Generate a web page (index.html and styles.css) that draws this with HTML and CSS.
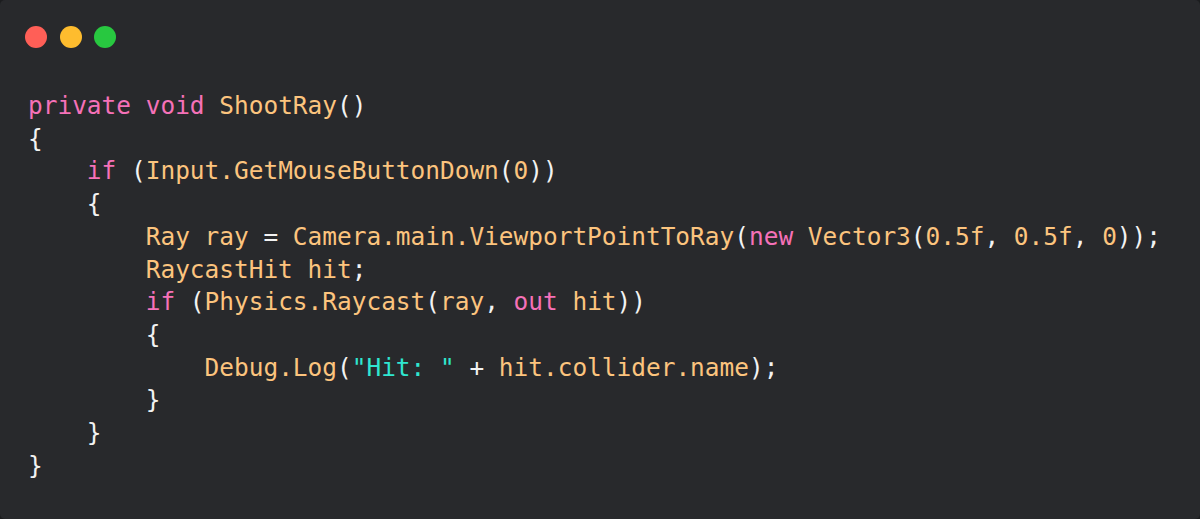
FILE: index.html
```html
<!DOCTYPE html>
<html>
<head>
<meta charset="utf-8">
<link rel="stylesheet" href="styles.css">
</head>
<body>
<div class="window">
  <div class="titlebar">
    <span class="dot red"></span>
    <span class="dot yellow"></span>
    <span class="dot green"></span>
  </div>
<pre class="code"><span class="k">private</span> <span class="k">void</span> <span class="f">ShootRay</span>()
{
    <span class="k">if</span> (<span class="f">Input.GetMouseButtonDown</span>(<span class="f">0</span>))
    {
        <span class="f">Ray ray</span> = <span class="f">Camera.main.ViewportPointToRay</span>(<span class="k">new</span> <span class="f">Vector3</span>(<span class="f">0.5f</span>, <span class="f">0.5f</span>, <span class="f">0</span>));
        <span class="f">RaycastHit hit</span>;
        <span class="k">if</span> (<span class="f">Physics.Raycast</span>(<span class="f">ray</span>, <span class="k">out</span> <span class="f">hit</span>))
        {
            <span class="f">Debug.Log</span>(<span class="s">"Hit: "</span> + <span class="f">hit.collider.name</span>);
        }
    }
}</pre>
</div>
</body>
</html>
```
FILE: styles.css
```css
html, body {
  margin: 0;
  padding: 0;
  background: #1c1d1f;
}
.window {
  width: 1200px;
  height: 519px;
  background: #28292c;
  border-radius: 5px;
  box-sizing: border-box;
  padding: 26px 0 0 0;
  overflow: hidden;
}
.titlebar {
  display: flex;
  gap: 12.5px;
  padding-left: 25px;
  height: 22px;
}
.dot {
  width: 22px;
  height: 22px;
  border-radius: 50%;
  display: block;
}
.red { background: #ff5f57; }
.yellow { background: #febc2e; }
.green { background: #28c840; }
.code {
  margin: 42px 0 0 28px;
  font-family: "DejaVu Sans Mono", monospace;
  font-size: 24.45px;
  line-height: 32.7px;
  color: #f2f2f2;
}
.k { color: #f571b8; }
.f { color: #fcc47e; }
.s { color: #2fe6d0; }
```
